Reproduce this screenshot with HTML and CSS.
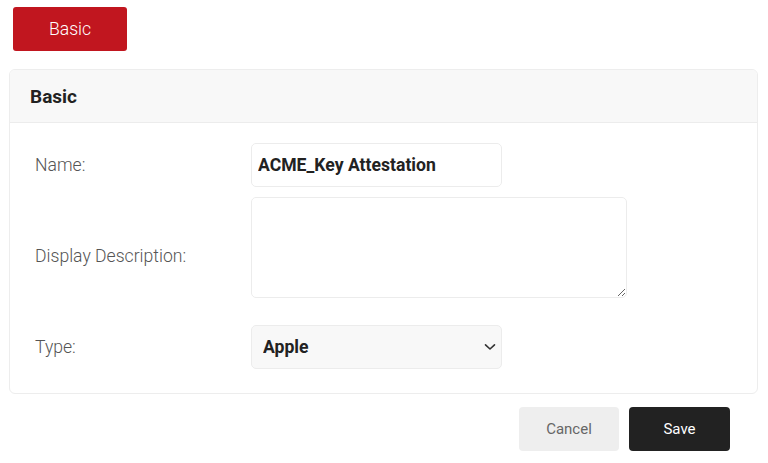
FILE: index.html
```html
<!DOCTYPE html>
<html>
<head>
<meta charset="utf-8">
<link rel="stylesheet" href="styles.css">
</head>
<body>
<div class="page">
  <div class="tabs">
    <button class="tab-btn">Basic</button>
  </div>
  <div class="card">
    <div class="card-header">Basic</div>
    <div class="card-body">
      <div class="row row-name">
        <label class="label">Name:</label>
        <input class="field input" type="text" value="ACME_Key Attestation">
      </div>
      <div class="row row-desc">
        <label class="label">Display Description:</label>
        <textarea class="field textarea"></textarea>
      </div>
      <div class="row row-type">
        <label class="label">Type:</label>
        <div class="select-wrap">
          <select class="field select"><option>Apple</option></select>
          <svg class="chevron" width="12" height="8" viewBox="0 0 12 8"><path d="M1.5 1.8 L6 6 L10.5 1.8" fill="none" stroke="#333" stroke-width="1.6" stroke-linecap="round" stroke-linejoin="round"/></svg>
        </div>
      </div>
    </div>
  </div>
  <div class="actions">
    <button class="btn btn-cancel">Cancel</button>
    <button class="btn btn-save">Save</button>
  </div>
</div>
</body>
</html>
```
FILE: styles.css
```css
html, body {
  margin: 0;
  padding: 0;
  background: #fff;
  font-family: Roboto, "Liberation Sans", sans-serif;
}
.page {
  padding: 7px 10px 0 9px;
}
.tabs {
  padding-left: 4px;
}
.tab-btn {
  width: 114px;
  height: 44px;
  background: #c1161f;
  color: #fff;
  border: none;
  border-radius: 3px;
  font-family: Roboto, sans-serif;
  font-weight: 300;
  font-size: 17.6px;
  padding: 0;
}
.card {
  margin-top: 18px;
  width: 749px;
  border: 1px solid #ededed;
  border-radius: 6px;
  box-sizing: border-box;
  overflow: hidden;
}
.card-header {
  background: #f8f8f8;
  height: 53px;
  box-sizing: border-box;
  border-bottom: 1px solid #ececec;
  padding-left: 20px;
  display: flex;
  align-items: center;
  font-weight: 700;
  font-size: 19px;
  color: #222;
}
.card-body {
  padding: 20px 0 24px 25px;
}
.row {
  display: flex;
  align-items: center;
}
.label {
  width: 216px;
  font-weight: 300;
  font-size: 17.6px;
  color: #555;
}
.row-name {
  height: 44px;
}
.row-desc {
  margin-top: 10px;
  height: 101px;
  align-items: flex-start;
}
.row-desc .label {
  padding-top: 49px;
}
.row-type {
  margin-top: 27px;
  height: 44px;
}
.field {
  box-sizing: border-box;
  border: 1px solid #ececec;
  border-radius: 5px;
  font-family: Roboto, sans-serif;
  font-weight: 700;
  font-size: 17.6px;
  color: #222;
  outline: none;
}
.input {
  width: 251px;
  height: 44px;
  padding: 0 6px;
  background: #fff;
}
.textarea {
  width: 376px;
  height: 101px;
  background: #fff;
  margin: 0;
  resize: both;
}
.select-wrap {
  position: relative;
  width: 251px;
  height: 44px;
}
.select {
  appearance: none;
  -webkit-appearance: none;
  width: 100%;
  height: 44px;
  background: #f8f8f8;
  padding: 0 11px;
}
.chevron {
  position: absolute;
  right: 6px;
  top: 18px;
  pointer-events: none;
}
.actions {
  display: flex;
  justify-content: flex-end;
  gap: 10px;
  margin-top: 13px;
  width: 721px;
}
.btn {
  width: 100px;
  height: 44px;
  border: none;
  border-radius: 4px;
  font-family: Roboto, sans-serif;
  font-weight: 400;
  font-size: 15px;
  padding: 0;
}
.btn-cancel {
  background: #eeeeee;
  color: #666;
}
.btn-save {
  width: 101px;
  background: #222;
  color: #fff;
}
```
